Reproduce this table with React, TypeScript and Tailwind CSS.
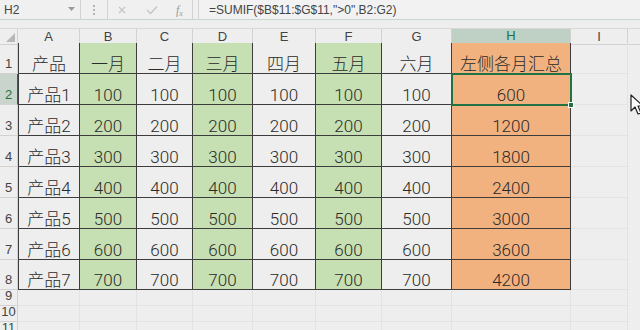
import React from "react";

const grid = "grid grid-cols-[18px_62px_57px_56px_60px_63px_66px_70px_119px_57px_12px]";
const letters = ["A", "B", "C", "D", "E", "F", "G", "H", "I"];
const months = ["一月", "二月", "三月", "四月", "五月", "六月"];

// B, D, F are the green columns, H is the orange total column
function fillFor(col: number) {
  if (col === 1 || col === 3 || col === 5) return "bg-[#c6e0b4]";
  if (col === 7) return "bg-[#f2b27f]";
  return "bg-[#eeeeee]";
}

function RowHead({ n, active, h }: { n: number; active?: boolean; h: string }) {
  return (
    <div
      className={`${h} flex items-end justify-center border-r border-b border-[#d2d2d2] text-[13px] leading-none pb-[3px] ${
        active ? "bg-[#c9d4cd] text-[#217346] border-r-[#217346]" : "text-[#444]"
      }`}
    >
      {n}
    </div>
  );
}

function TableRow({ n, cells }: { n: number; cells: string[] }) {
  const h = n === 8 ? "h-[30px]" : "h-[31px]";
  return (
    <div className={grid}>
      <RowHead n={n} active={n === 2} h={h} />
      {cells.map((text, i) => (
        <div
          key={i}
          className={`${h} ${fillFor(i)} flex items-end justify-center border-r border-b border-[#3d3d3d] ${
            i === 0 ? "border-l" : ""
          } text-[17px] font-light leading-[17px] text-[#2a2a2a]`}
          style={{ fontFamily: 'Roboto, "Noto Sans CJK SC", sans-serif' }}
        >
          {text}
        </div>
      ))}
      <div className={`${h} border-r border-b border-[#e3e3e3]`} />
      <div className={`${h}`} />
    </div>
  );
}

function EmptyRow({ n, h }: { n: number; h: string }) {
  return (
    <div className={grid}>
      <RowHead n={n} h={h} />
      {letters.map((l) => (
        <div key={l} className={`${h} border-r border-b border-[#e3e3e3]`} />
      ))}
      <div className={h} />
    </div>
  );
}

export default function App() {
  const rows = [1, 2, 3, 4, 5, 6, 7].map((n) => [
    `产品${n}`,
    ...months.map(() => String(n * 100)),
    String(n * 600),
  ]);

  return (
    <div
      className="relative w-[640px] h-[330px] overflow-hidden bg-[#eeeeee] text-[#333]"
      style={{ fontFamily: '"Liberation Sans", "Noto Sans CJK SC", sans-serif' }}
    >
      {/* formula bar */}
      <div className="flex h-[20px] border-b border-[#c9d6ce] bg-[#f0f0f0] text-[12px] text-[#444]">
        <div className="w-[81px] flex items-center justify-between pl-[4px] pr-[5px] border-r border-[#d3d3d3]">
          <span>H2</span>
          <svg width="7" height="5" viewBox="0 0 7 5">
            <path d="M0 0h7L3.5 4z" fill="#9a9a9a" />
          </svg>
        </div>
        <div className="w-[26px] flex flex-col items-center justify-center gap-[2px]">
          <span className="w-[2px] h-[2px] bg-[#b5b5b5]" />
          <span className="w-[2px] h-[2px] bg-[#b5b5b5]" />
          <span className="w-[2px] h-[2px] bg-[#b5b5b5]" />
        </div>
        <div className="w-[86px] flex items-center justify-around border-l border-r border-[#d3d3d3] text-[#bdbdbd]">
          <svg width="10" height="10" viewBox="0 0 10 10">
            <path d="M2 2l6 6M8 2L2 8" stroke="#c4c4c4" strokeWidth="1.2" />
          </svg>
          <svg width="12" height="10" viewBox="0 0 12 10">
            <path d="M1 5l3.5 3.5L11 1.5" stroke="#c4c4c4" strokeWidth="1.3" fill="none" />
          </svg>
          <span className="italic text-[12px] text-[#9a9a9a]" style={{ fontFamily: '"Liberation Serif", serif' }}>
            f<sub className="text-[8px]">x</sub>
          </span>
        </div>
        <div className="flex-1 ml-[5px] border-l border-[#d3d3d3] flex items-center pl-[10px] bg-[#f2f2f2]">
          =SUMIF($B$11:$G$11,"&gt;0",B2:G2)
        </div>
      </div>

      <div className="h-[8px]" />

      {/* column headers */}
      <div className={`${grid} h-[15px] border-t border-[#d8d8d8] text-[13px] leading-none text-[#444]`}>
        <div className="relative border-r border-b border-[#d2d2d2]">
          <svg className="absolute right-[2px] bottom-[2px]" width="9" height="9" viewBox="0 0 9 9">
            <path d="M9 0v9H0z" fill="#b8b8b8" />
          </svg>
        </div>
        {letters.map((l) => (
          <div
            key={l}
            className={`flex items-end justify-center pb-[1px] border-r border-b ${
              l === "H"
                ? "bg-[#bfd0c5] text-[#217346] border-b-2 border-b-[#217346] border-r-[#d2d2d2]"
                : "border-[#d2d2d2]"
            }`}
          >
            {l}
          </div>
        ))}
        <div className="border-b border-[#d2d2d2]" />
      </div>

      <TableRow n={1} cells={["产品", ...months, "左侧各月汇总"]} />
      {rows.map((cells, i) => (
        <TableRow key={i} n={i + 2} cells={cells} />
      ))}
      <EmptyRow n={9} h="h-[16px]" />
      <EmptyRow n={10} h="h-[16px]" />
      <EmptyRow n={11} h="h-[16px]" />

      {/* selection on H2 */}
      <div className="absolute left-[451px] top-[73px] w-[121px] h-[33px] border-2 border-[#217346] pointer-events-none">
        <div className="absolute -right-[4px] -bottom-[4px] w-[6px] h-[6px] bg-[#217346] border border-white" />
      </div>

      {/* mouse pointer */}
      <svg className="absolute left-[630px] top-[94px]" width="14" height="22" viewBox="0 0 14 22">
        <path d="M1 1v16l4-4 3 7 3-1-3-7h5z" fill="#fff" stroke="#222" strokeWidth="1.2" strokeLinejoin="round" />
      </svg>
    </div>
  );
}
